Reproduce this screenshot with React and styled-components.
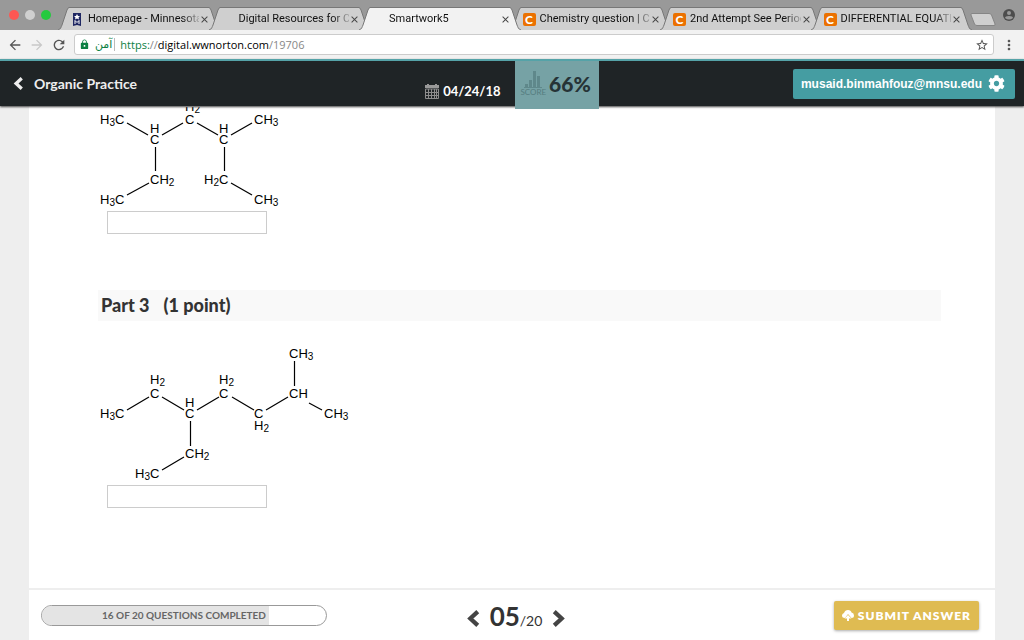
import React from "react";
import styled, { createGlobalStyle } from "styled-components";
import { FaCog } from "react-icons/fa";
import {
  MdArrowBack,
  MdArrowForward,
  MdRefresh,
  MdLock,
  MdStarBorder,
  MdMoreVert,
  MdClose,
} from "react-icons/md";

const tabs = [
  { title: "Homepage - Minnesota", icon: "mnsu" },
  { title: "Digital Resources for Ch" },
  { title: "Smartwork5", active: true },
  { title: "Chemistry question | Ch", icon: "chegg" },
  { title: "2nd Attempt See Period", icon: "chegg" },
  { title: "DIFFERENTIAL EQUATIO", icon: "chegg" },
];

// labels: [x, baseline, text], bonds: [x1, y1, x2, y2]
const partTwo = {
  width: 190,
  height: 101,
  labels: [
    [0, 17, "H3C"], [50, 26, "H"], [50, 37, "C"], [85, 4, "H2"], [85, 17, "C"],
    [119, 26, "H"], [119, 37, "C"], [154, 17, "CH3"], [50, 77, "CH2"],
    [104, 77, "H2C"], [0, 97, "H3C"], [154, 97, "CH3"],
  ],
  bonds: [
    [27, 16, 48, 28], [62, 28, 83, 16], [97, 16, 118, 28], [131, 28, 152, 16],
    [55.5, 40, 55.5, 64], [124.5, 40, 124.5, 64], [49, 76, 27, 88], [131, 76, 152, 88],
  ],
};

const partThree = {
  width: 260,
  height: 137,
  labels: [
    [189, 13, "CH3"], [189, 53, "CH"], [224, 73, "CH3"], [154, 73, "C"],
    [154, 85, "H2"], [119, 53, "C"], [119, 39, "H2"], [85, 62, "H"], [85, 73, "C"],
    [50, 53, "C"], [50, 39, "H2"], [0, 73, "H3C"], [85, 113, "CH2"], [35, 133, "H3C"],
  ],
  bonds: [
    [194.5, 16, 194.5, 41], [209, 58, 222, 65], [166, 65, 188, 52], [132, 52, 154, 65],
    [97, 65, 119, 52], [62, 52, 84, 65], [27, 65, 49, 52], [90.5, 76, 90.5, 101],
    [84, 112, 62, 125],
  ],
};

function Molecule({ width, height, labels, bonds, title }) {
  return (
    <Drawing width={width} height={height} viewBox={`0 0 ${width} ${height}`} aria-label={title}>
      {bonds.map(([x1, y1, x2, y2]) => (
        <line key={`${x1}-${y1}-${x2}`} x1={x1} y1={y1} x2={x2} y2={y2} />
      ))}
      {labels.map(([x, y, text]) => (
        <text key={`${x}-${y}`} x={x} y={y}>
          {text.split(/(\d)/).filter(Boolean).map((part, i) =>
            /\d/.test(part) ? <tspan key={i} fontSize="10" dy="2">{part}</tspan>
              : <tspan key={i} dy={i > 0 ? -2 : 0}>{part}</tspan>
          )}
        </text>
      ))}
    </Drawing>
  );
}

function Chevron({ size, next }) {
  return (
    <svg width={size} height={size} viewBox="0 0 16 16">
      <path d={next ? "M4 1.500L11 8 4 14.500" : "M12 1.500L5 8l7 6.500"} fill="none" stroke="currentColor" strokeWidth="4" />
    </svg>
  );
}

function Favicon({ icon }) {
  if (icon === "chegg") return <CheggIcon>C</CheggIcon>;
  if (icon === "mnsu") {
    return (
      <svg width="13" height="13" viewBox="0 0 13 13">
        <path d="M2 0h8v13l-4-1-4 1z" fill="#1f2762" />
        <path d="M6 1l1 2h2L7.500 4.500 8 6.500 6 5.500 4 6.500l.5-2L3 3h2z" fill="#fff" />
        <path d="M4 11V7.500l2 2 2-2V11" fill="none" stroke="#fff" />
      </svg>
    );
  }
  return <NoIcon />;
}

function Tab({ title, icon, active }) {
  return (
    <TabShell $active={active}>
      <Slant viewBox="0 0 11 23">
        <path d="M0 23C3 22 3 20 4 18L9 3Q10 0.500 11 0.500V23z" />
        <path className="edge" d="M0 23C3 22 3 20 4 18L9 3Q10 0.500 11 0.500" />
      </Slant>
      <TabBody>
        <Favicon icon={icon} />
        <TabTitle>{title}</TabTitle>
        <TabClose type="button" aria-label={`Close ${title}`}><MdClose /></TabClose>
      </TabBody>
      <Slant viewBox="0 0 11 23">
        <path d="M11 23C8 22 8 20 7 18L2 3Q1 0.500 0 0.500V23z" />
        <path className="edge" d="M11 23C8 22 8 20 7 18L2 3Q1 0.500 0 0.500" />
      </Slant>
    </TabShell>
  );
}

export default function App() {
  return (
    <Window>
      <GlobalStyle />
      <TabStrip>
        <Lights>
          <Light $color="#fc5753" />
          <Light $color="#cfcfcf" />
          <Light $color="#24c93f" />
        </Lights>
        <TabList>
          {tabs.map((tab) => <Tab key={tab.title} {...tab} />)}
        </TabList>
        <NewTab type="button" aria-label="New tab">
          <svg width="26" height="13" viewBox="0 0 26 13">
            <path d="M2 .5h17q2 0 2.500 1.500l3.500 9q.5 1.500-1 1.500H7q-2 0-2.500-1.500L1 2Q.5.500 2 .5z" fill="#cfcfcf" stroke="#858585" />
          </svg>
        </NewTab>
        <Profile type="button" aria-label="Profile">
          <svg width="12" height="12" viewBox="0 0 12 12">
            <circle cx="6" cy="6" r="6" fill="#4d4d4d" />
            <circle cx="6" cy="4" r="2" fill="#999" />
            <path d="M2 9Q2 7 6 7T10 9Q8 10.500 6 10.500T2 9z" fill="#999" />
          </svg>
        </Profile>
      </TabStrip>

      <Toolbar>
        <ToolButton type="button" aria-label="Back"><MdArrowBack /></ToolButton>
        <ToolButton type="button" aria-label="Forward" disabled><MdArrowForward /></ToolButton>
        <ToolButton type="button" aria-label="Reload"><MdRefresh /></ToolButton>
        <AddressBar>
          <MdLock size={11} color="#0b8043" />
          <Secure lang="ar">آمن</Secure>
          <Address>
            <b>https:</b>//<strong>digital.wwnorton.com</strong>/19706
          </Address>
          <StarButton type="button" aria-label="Bookmark"><MdStarBorder /></StarButton>
        </AddressBar>
        <ToolButton type="button" aria-label="Menu"><MdMoreVert /></ToolButton>
      </Toolbar>

      <Header>
        <BackLink href="#assignments">
          <Chevron size={13} />
          Organic Practice
        </BackLink>
        <Status>
          <DueDate>
            <svg width="14" height="15" viewBox="0 0 14 15">
              <path d="M2 0h2v1h6V0h2v1h2v3H0V1h2z" fill="#999" />
              <path d="M.5 5v9.500h13V5zM.5 8.500h13M.5 11.500h13M3.500 5v9M6.500 5v9M9.500 5v9M11.500 5v9" fill="none" stroke="#8c8c8c" />
            </svg>
            04/24/18
          </DueDate>
          <Score>
            <ScoreLabel>
              <svg width="18" height="17" viewBox="0 0 18 17">
                <path d="M1 13h3v3H1zM5 9h3v7H5zM9 0h3v16H9zM13 5h3v11h-3zM0 16h18v1H0z" fill="#5f888b" />
              </svg>
              SCORE
            </ScoreLabel>
            66%
          </Score>
        </Status>
        <Account type="button">
          musaid.binmahfouz@mnsu.edu
          <FaCog size={17} />
        </Account>
      </Header>

      <Page>
        <Sheet>
          <Questions>
            <Question>
              <Molecule {...partTwo} title="Part 2 structure" />
              <Answer type="text" aria-label="Part 2 answer" />
            </Question>
            <PartHeading>
              <span>Part 3</span>
              <span>(1 point)</span>
            </PartHeading>
            <Question>
              <Molecule {...partThree} title="Part 3 structure" />
              <Answer type="text" aria-label="Part 3 answer" />
            </Question>
          </Questions>
          <Footer>
            <Progress>
              <ProgressFill style={{ width: `${(16 / 20) * 100}%` }} />
              <ProgressText>16 OF 20 QUESTIONS COMPLETED</ProgressText>
            </Progress>
            <Pager>
              <PagerButton type="button" aria-label="Previous"><Chevron size={17} /></PagerButton>
              <PageNumber>05<small>/20</small></PageNumber>
              <PagerButton type="button" aria-label="Next"><Chevron size={17} next /></PagerButton>
            </Pager>
            <Submit type="button">
              <svg width="12" height="11" viewBox="0 0 12 11">
                <path d="M3 8Q0 8 0 5.500 0 3.500 2 3 3 0 6 0T9.500 2.500Q12 3 12 5.500 12 8 9.500 8L6 4z" fill="#fff" />
                <path d="M6 5l3.500 3.500H7V11H5V8.500H2.500z" fill="#fff" />
              </svg>
              SUBMIT ANSWER
            </Submit>
          </Footer>
        </Sheet>
      </Page>
    </Window>
  );
}

const GlobalStyle = createGlobalStyle`
  * {
    box-sizing: border-box;
  }
  body {
    margin: 0;
    font-family: Lato, "Liberation Sans", sans-serif;
    color: #333;
  }
  button {
    display: flex;
    align-items: center;
    justify-content: center;
    border: 0;
    padding: 0;
    background: none;
    font-family: inherit;
    color: inherit;
  }
  svg {
    flex-shrink: 0;
  }
`;

const Window = styled.div`
  display: flex;
  flex-direction: column;
  height: 100vh;
  overflow: hidden;
`;

const TabStrip = styled.div`
  display: flex;
  align-items: flex-end;
  height: 30px;
  background: #999;
  font-family: Roboto, sans-serif;
`;

const Lights = styled.div`
  display: flex;
  gap: 6px;
  width: 58px;
  padding: 0 0 10px 9px;
`;

const Light = styled.span`
  width: 10px;
  height: 10px;
  border-radius: 50%;
  background: ${({ $color }) => $color};
`;

const TabList = styled.div`
  display: flex;
  flex: 0 1 914px;
  min-width: 0;
`;

const TabShell = styled.div`
  --tab: ${({ $active }) => ($active ? "#f2f2f2" : "#cfcfcf")};
  display: flex;
  position: relative;
  z-index: ${({ $active }) => ($active ? 1 : 0)};
  flex: 1;
  min-width: 0;
  height: 23px;
  & + & {
    margin-left: -11px;
  }
`;

const Slant = styled.svg`
  width: 11px;
  height: 23px;
  fill: var(--tab);
  .edge {
    fill: none;
    stroke: #777;
  }
`;

const TabBody = styled.div`
  display: flex;
  align-items: center;
  flex: 1;
  min-width: 0;
  padding-left: 2px;
  border-top: 1px solid #777;
  background: var(--tab);
`;

const CheggIcon = styled.span`
  width: 13px;
  height: 13px;
  border-radius: 2px;
  background: #eb7100;
  color: #fff;
  font: 900 12px/13px Lato, sans-serif;
  text-align: center;
`;

const NoIcon = styled.span`
  width: 13px;
`;

const TabTitle = styled.span`
  flex: 1;
  min-width: 0;
  margin-left: 4px;
  overflow: hidden;
  white-space: nowrap;
  font-size: 11px;
  line-height: 16px;
  color: #111;
  mask-image: linear-gradient(to right, #000 85%, #0003);
`;

const TabClose = styled.button`
  width: 11px;
  margin-right: -1px;
  font-size: 11px;
  color: #444;
`;

const NewTab = styled.button`
  margin: 0 0 4px -2px;
`;

const Profile = styled.button`
  margin: 0 9px 9px auto;
`;

const Toolbar = styled.div`
  display: flex;
  align-items: center;
  height: 29px;
  padding: 0 4px;
  background: #f2f2f2;
`;

const ToolButton = styled.button`
  width: 22px;
  height: 22px;
  font-size: 16px;
  color: ${({ disabled }) => (disabled ? "#c8c8c8" : "#555")};
`;

const AddressBar = styled.div`
  display: flex;
  align-items: center;
  flex: 1;
  height: 21px;
  margin: 0 4px;
  padding: 0 4px;
  border: 1px solid #ccc;
  border-radius: 3px;
  background: #fff;
`;

const Secure = styled.span`
  margin: 0 5px;
  padding-right: 2px;
  border-right: 1px solid #bbb;
  font: 11px/13px "DejaVu Sans", sans-serif;
  color: #0b8043;
`;

const Address = styled.span`
  flex: 1;
  font: 11px/16px "Open Sans", sans-serif;
  color: #888;
  b {
    font-weight: 400;
    color: #0b8043;
  }
  strong {
    font-weight: 400;
    color: #000;
  }
`;

const StarButton = styled.button`
  font-size: 14px;
  color: #555;
`;

const Header = styled.header`
  display: grid;
  grid-template: 45px / 1fr auto 1fr;
  height: 47px;
  border-top: 2px solid #55a3a8;
  background: #1f2426;
  box-shadow: 0 1px 2px #444;
  color: #fff;
  z-index: 2;
`;

const BackLink = styled.a`
  display: flex;
  align-items: center;
  gap: 9px;
  padding-left: 12px;
  font-size: 14px;
  font-weight: 700;
  color: #eee;
  text-decoration: none;
`;

const Status = styled.div`
  display: flex;
  height: 48px;
`;

const DueDate = styled.div`
  display: flex;
  align-items: center;
  gap: 4px;
  padding: 12px 14px 0 0;
  font-size: 13px;
  font-weight: 700;
`;

const Score = styled.div`
  display: flex;
  align-items: center;
  gap: 3px;
  padding: 0 8px 4px 6px;
  background: #76a2a5;
  font-size: 21px;
  font-weight: 900;
  color: #263336;
`;

const ScoreLabel = styled.span`
  display: flex;
  flex-direction: column;
  align-items: center;
  font-size: 8px;
  line-height: 8px;
  font-weight: 400;
  color: #557d80;
`;

const Account = styled.button`
  justify-self: end;
  align-self: center;
  gap: 6px;
  height: 30px;
  margin-right: 9px;
  padding: 0 10px 0 8px;
  border-radius: 2px;
  background: #459da2;
  font: 700 12px "Liberation Sans", sans-serif;
  color: #fff;
`;

const Page = styled.main`
  flex: 1;
  min-height: 0;
  padding: 0 29px;
  background: #eee;
`;

const Sheet = styled.div`
  display: flex;
  flex-direction: column;
  height: 100%;
  background: #fff;
`;

const Questions = styled.div`
  flex: 1;
  min-height: 0;
  overflow: hidden;
  padding: 1px 54px 0 69px;
`;

const Question = styled.div`
  display: flex;
  flex-direction: column;
  align-items: flex-start;
  padding-left: 2px;
`;

const Drawing = styled.svg`
  margin-bottom: 3px;
  font: 13px "Liberation Sans", sans-serif;
  fill: #000;
  line {
    stroke: #000;
    stroke-width: 1.2;
  }
`;

const Answer = styled.input`
  width: 160px;
  height: 23px;
  margin-left: 7px;
  border: 1px solid #ccc;
  background: #fff;
`;

const PartHeading = styled.h2`
  display: flex;
  gap: 14px;
  margin: 56px 0 24px;
  padding: 0 3px;
  background: #f9f9f9;
  font-size: 18px;
  line-height: 31px;
  font-weight: 900;
`;

const Footer = styled.footer`
  display: grid;
  grid-template-columns: 1fr auto 1fr;
  align-items: center;
  height: 52px;
  padding: 1px 16px 0 12px;
  border-top: 2px solid #eee;
`;

const Progress = styled.div`
  display: grid;
  width: 286px;
  height: 21px;
  border: 1px solid #999;
  border-radius: 11px;
  overflow: hidden;
`;

const ProgressFill = styled.div`
  grid-area: 1 / 1;
  background: #e4e4e4;
`;

const ProgressText = styled.span`
  grid-area: 1 / 1;
  font-size: 10px;
  line-height: 19px;
  font-weight: 700;
  text-align: center;
  color: #666;
`;

const Pager = styled.nav`
  display: flex;
  align-items: center;
  gap: 9px;
  margin-left: 12px;
  padding-top: 6px;
`;

const PagerButton = styled.button`
  width: 15px;
  color: #444;
`;

const PageNumber = styled.span`
  font-size: 26px;
  line-height: 32px;
  font-weight: 700;
  small {
    font-size: 14px;
    font-weight: 400;
  }
`;

const Submit = styled.button`
  justify-self: end;
  gap: 4px;
  height: 29px;
  padding: 0 8px;
  border-radius: 2px;
  background: #dfbb52;
  box-shadow: 0 1px 3px #aaa;
  font-size: 12px;
  font-weight: 800;
  letter-spacing: 1px;
  color: #fff;
`;
